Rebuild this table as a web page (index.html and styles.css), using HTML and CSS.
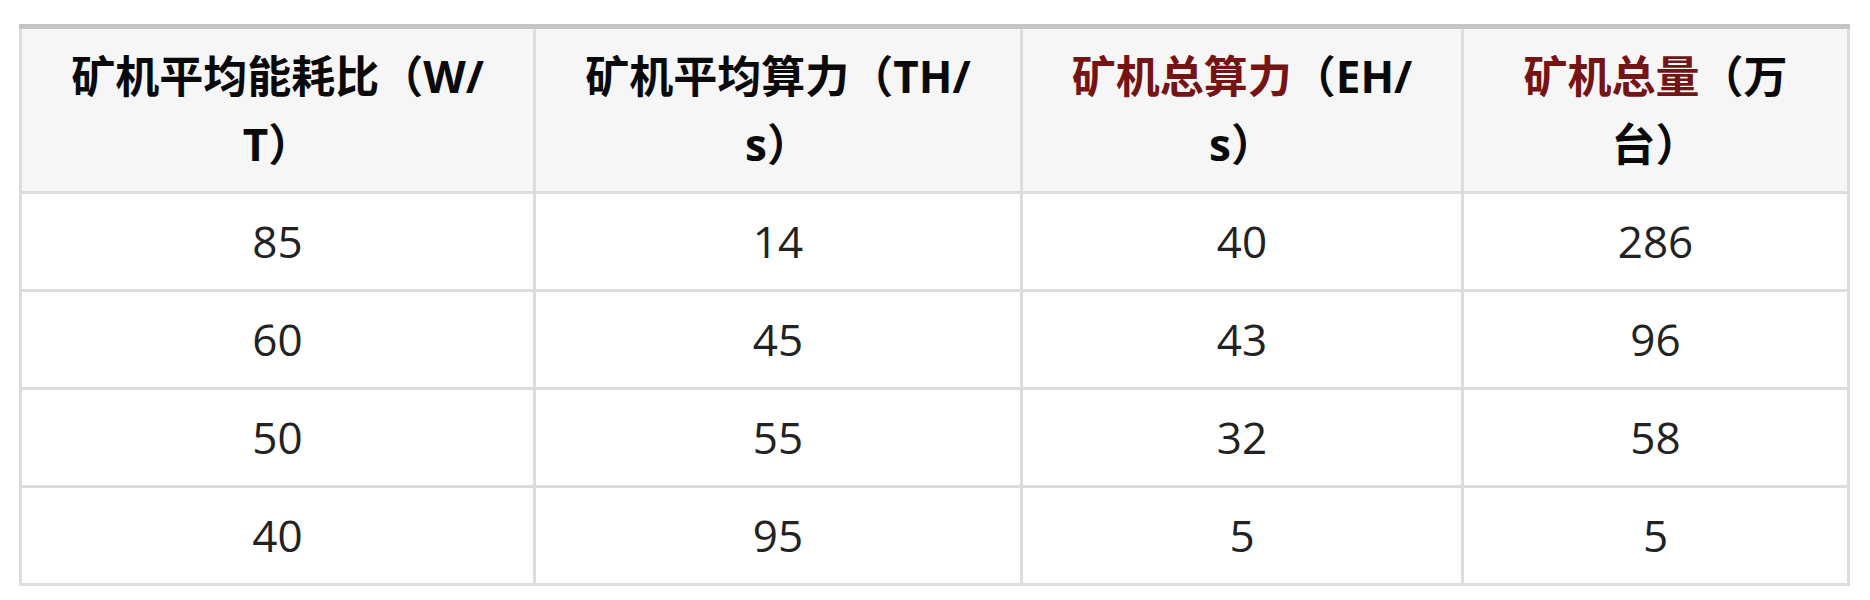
FILE: index.html
```html
<!DOCTYPE html>
<html lang="zh-CN">
<head>
<meta charset="utf-8">
<title>矿机数据</title>
<link rel="stylesheet" href="styles.css">
</head>
<body>
<table class="data">
  <colgroup>
    <col class="c1"><col class="c2"><col class="c3"><col class="c4">
  </colgroup>
  <thead>
    <tr>
      <th>矿机平均能耗比（W/<br>T）</th>
      <th>矿机平均算力（TH/<br>s）</th>
      <th><span class="hl">矿机总算力</span>（EH/<br>s）</th>
      <th><span class="hl">矿机总量</span>（万<br>台）</th>
    </tr>
  </thead>
  <tbody>
    <tr><td>85</td><td>14</td><td>40</td><td>286</td></tr>
    <tr><td>60</td><td>45</td><td>43</td><td>96</td></tr>
    <tr><td>50</td><td>55</td><td>32</td><td>58</td></tr>
    <tr><td>40</td><td>95</td><td>5</td><td>5</td></tr>
  </tbody>
</table>
</body>
</html>
```
FILE: styles.css
```css
html, body {
  margin: 0;
  padding: 0;
  background: #ffffff;
}
body {
  padding: 24px 0 0 19px;
  font-family: "Open Sans", "Noto Sans CJK SC", sans-serif;
  color: #222222;
}
.data {
  border-collapse: collapse;
  table-layout: fixed;
  width: 1828px;
  font-size: 44px;
  line-height: 68px;
}
.c1 { width: 514px; }
.c2 { width: 487px; }
.c3 { width: 441px; }
.c4 { width: 386px; }
.data th,
.data td {
  border: 3px solid #dcdcdc;
  padding: 13px 8px;
  text-align: center;
  vertical-align: middle;
}
.data td {
  padding: 13px 8px 14px;
  font-weight: 400;
  color: #222222;
}
.data thead tr th {
  border-top: 5px solid #c4c4c4;
  background: #f6f6f6;
  font-weight: 700;
  color: #0a0a0a;
}
.hl {
  color: #741414;
}
```
